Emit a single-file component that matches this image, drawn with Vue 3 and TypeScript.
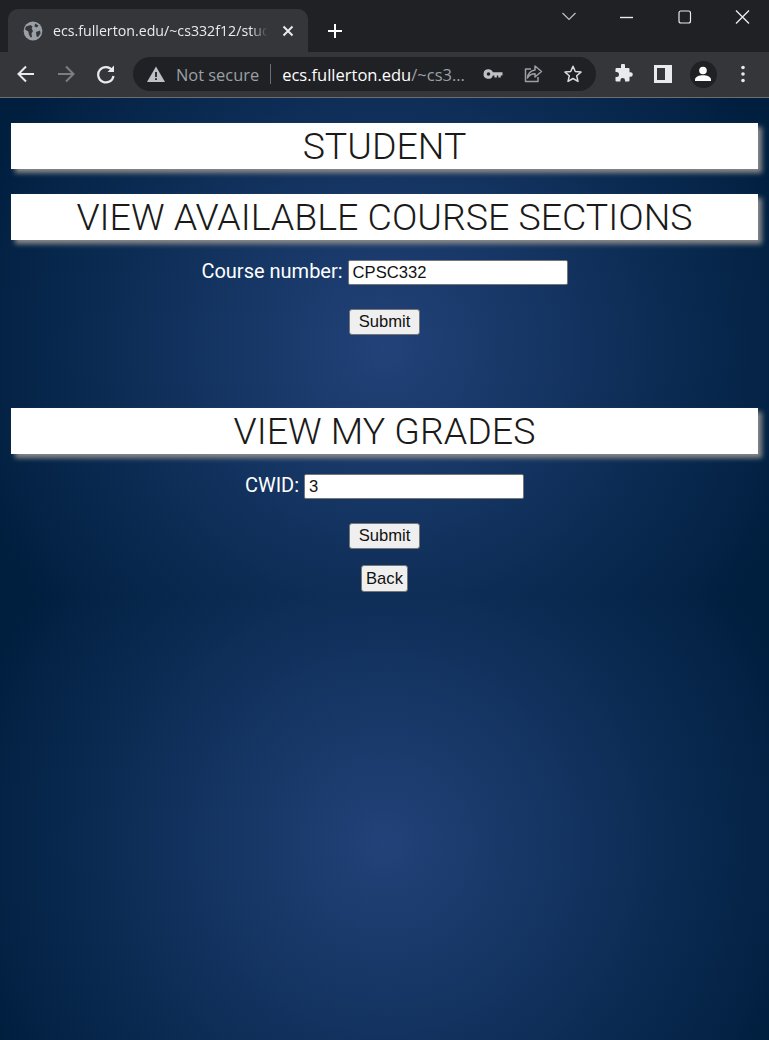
<script setup lang="ts">
const tabTitle: string = 'ecs.fullerton.edu/~cs332f12/student.php'
const courseNumber = 'CPSC332'
const cwid = '3'
</script>

<template>
  <div class="window">
    <header class="titlebar">
      <div class="tab">
        <svg class="favicon" viewBox="0 0 20 20" width="20" height="20">
          <circle cx="10" cy="10" r="9.400" fill="#9aa0a6" />
          <path d="M3 5.500 7.500 4l2 1.500-.8 2.200L10 10l-1.500 2.500L9 16l-1.500.5-1.700-3.300-.4-2.600L2 8.500zM12 2.500l3.500 2-1.500 2-2.500-1zM13 11l4-1.500.6 3-2.600 3.500-1.500-.5z" fill="#35363a" />
        </svg>
        <span class="tab-title">{{ tabTitle }}</span>
        <svg class="tab-close" viewBox="0 0 12 12" width="12" height="12">
          <path d="M1.500 1.500l9 9M10.500 1.500l-9 9" stroke="#e8eaed" stroke-width="2" fill="none" />
        </svg>
      </div>
      <svg class="new-tab" viewBox="0 0 16 16" width="16" height="16">
        <path d="M8 1v14M1 8h14" stroke="#fff" stroke-width="2" fill="none" />
      </svg>
      <div class="win-controls">
        <svg class="win-btn" viewBox="0 0 58 30" width="58" height="30"><path d="M22.500 13l6.500 6.500 6.500-6.500" stroke="#bdc1c6" stroke-width="1.200" fill="none" /></svg>
        <svg class="win-btn" viewBox="0 0 58 30" width="58" height="30"><path d="M22 17.500h13" stroke="#e8eaed" stroke-width="1.400" fill="none" /></svg>
        <svg class="win-btn" viewBox="0 0 58 30" width="58" height="30"><rect x="23" y="11" width="11.500" height="12" rx="2" stroke="#e8eaed" stroke-width="1.200" fill="none" /></svg>
        <svg class="win-btn" viewBox="0 0 58 30" width="58" height="30"><path d="M22 10.500l13 13M35 10.500l-13 13" stroke="#e8eaed" stroke-width="1.400" fill="none" /></svg>
      </div>
    </header>

    <nav class="toolbar">
      <div class="tool">
        <svg viewBox="0 0 20 20" width="20" height="20"><path d="M18 10H3M10 2.500 2.500 10l7.500 7.500" stroke="#e8eaed" stroke-width="2" fill="none" /></svg>
      </div>
      <div class="tool">
        <svg viewBox="0 0 20 20" width="20" height="20"><path d="M2 10h15M10 2.500l7.500 7.500-7.500 7.500" stroke="#7b7e82" stroke-width="2" fill="none" /></svg>
      </div>
      <div class="tool">
        <svg viewBox="0 0 20 20" width="20" height="20"><path d="M16.200 6.300A7.700 7.700 0 1 0 17.500 12" stroke="#e8eaed" stroke-width="2.200" fill="none" /><path d="M18 1.500V8h-6.500z" fill="#e8eaed" /></svg>
      </div>
      <div class="omnibox">
        <svg class="warn" viewBox="0 0 18 16" width="18" height="16">
          <path d="M9 0.500 18 16H0z" fill="#bdc1c6" />
          <path d="M8.100 6h1.800v5H8.100zM8.100 12.200h1.800V14H8.100z" fill="#202124" />
        </svg>
        <span class="not-secure">Not secure</span>
        <span class="divider"></span>
        <span class="url"><b>ecs.fullerton.edu</b><i>/~cs3...</i></span>
        <div class="omni-icons">
          <svg viewBox="0 0 20 20" width="20" height="20"><path fill-rule="evenodd" d="M5.500 5.200a4.800 4.800 0 0 1 4.400 3H19.500v3.300h-1.800v2h-2.400v-2H13.800v2h-2.400v-2H9.900a4.800 4.800 0 1 1-4.400-6.300zm0 3a1.800 1.800 0 1 0 0 3.600 1.800 1.800 0 0 0 0-3.600z" fill="#bdc1c6" /></svg>
          <svg viewBox="0 0 20 20" width="20" height="20"><path d="M8 5H2.500v12.500H15V13M12 2l6.500 5.500L12 13V9.800c-3.500 0-6 1.200-7.500 4.200 .5-4.500 3.200-7.400 7.500-8z" stroke="#9aa0a6" stroke-width="1.500" fill="none" stroke-linejoin="round" /></svg>
          <svg viewBox="0 0 20 20" width="20" height="20"><path d="M10 2.300l2.300 5.200 5.700.6-4.300 3.700 1.300 5.600L10 14.500l-5 2.900 1.300-5.600L2 8.100l5.700-.6z" stroke="#dadce0" stroke-width="1.500" fill="none" stroke-linejoin="round" /></svg>
        </div>
      </div>
      <div class="tool first-ext">
        <svg viewBox="0 0 20 20" width="20" height="20"><path d="M8 1.500a2 2 0 0 1 4 .2V4h3.500A1 1 0 0 1 16.500 5v3.200h1a2.300 2.300 0 0 1 0 4.600h-1v3.700a1 1 0 0 1-1 1H12v-1.200a2.300 2.300 0 0 0-4.600 0v1.200H3.500a1 1 0 0 1-1-1V13h1a2.500 2.500 0 0 0 0-5h-1V5a1 1 0 0 1 1-1H8z" fill="#e8eaed" /></svg>
      </div>
      <div class="tool">
        <svg viewBox="0 0 20 20" width="20" height="20"><path d="M1 1h18v18H1z" fill="#e8eaed" /><path d="M4 4h8v12H4z" fill="#35363a" /></svg>
      </div>
      <div class="tool">
        <span class="avatar">
          <svg viewBox="0 0 20 20" width="20" height="20"><circle cx="10" cy="6.500" r="3.800" fill="#fff" /><path d="M2 17v-1.500c0-2.800 4.400-4.300 8-4.300s8 1.500 8 4.300V17z" fill="#fff" /></svg>
        </span>
      </div>
      <div class="tool">
        <svg viewBox="0 0 20 20" width="20" height="20"><circle cx="10" cy="3.500" r="1.800" fill="#e8eaed" /><circle cx="10" cy="10" r="1.800" fill="#e8eaed" /><circle cx="10" cy="16.500" r="1.800" fill="#e8eaed" /></svg>
      </div>
    </nav>

    <main class="page">
      <h1 class="band student">STUDENT</h1>

      <h1 class="band">VIEW AVAILABLE COURSE SECTIONS</h1>
      <form class="form" @submit.prevent>
        <div class="field">
          <label for="course">Course number:</label>
          <input id="course" type="text" :value="courseNumber" />
        </div>
        <button class="btn" type="submit">Submit</button>
      </form>

      <h1 class="band grades">VIEW MY GRADES</h1>
      <form class="form" @submit.prevent>
        <div class="field">
          <label for="cwid">CWID:</label>
          <input id="cwid" type="text" :value="cwid" />
        </div>
        <button class="btn" type="submit">Submit</button>
      </form>
      <button class="btn back" type="button">Back</button>
    </main>
  </div>
</template>

<style scoped>
.window {
  display: flex;
  flex-direction: column;
  width: 769px;
  height: 1040px;
  overflow: hidden;
}

/* Browser chrome */
.titlebar {
  display: flex;
  align-items: flex-start;
  height: 52px;
  flex: none;
  background: #202124;
  padding-left: 8px;
  box-sizing: border-box;
}
.tab {
  display: flex;
  align-items: center;
  width: 300px;
  height: 43px;
  margin-top: 9px;
  background: #35363a;
  border-radius: 10px 10px 0 0;
  padding: 0 14px 0 15px;
  box-sizing: border-box;
}
.favicon {
  flex: none;
  margin-right: 10px;
}
.tab-title {
  flex: 1;
  min-width: 0;
  overflow: hidden;
  white-space: nowrap;
  font: 14.2px "Open Sans", sans-serif;
  color: #e8eaed;
  -webkit-mask-image: linear-gradient(to right, #000 90%, transparent 98%);
  mask-image: linear-gradient(to right, #000 90%, transparent 98%);
}
.tab-close {
  flex: none;
  margin-left: 10px;
}
.new-tab {
  margin: 23px 0 0 19px;
}
.win-controls {
  display: flex;
  margin-left: auto;
  margin-right: -3px;
}
.win-btn {
  display: block;
}
.toolbar {
  display: flex;
  align-items: center;
  flex: none;
  height: 46px;
  padding: 0 6px 1px 6px;
  box-sizing: border-box;
  background: #35363a;
  border-bottom: 1px solid #6b6d70;
}
.tool {
  flex: none;
  display: flex;
  align-items: center;
  justify-content: center;
  width: 40px;
  height: 34px;
}
.first-ext {
  margin-left: 7px;
}
.avatar {
  display: flex;
  align-items: center;
  justify-content: center;
  width: 27px;
  height: 27px;
  border-radius: 50%;
  background: #202124;
}
.avatar svg {
  width: 20px;
  height: 20px;
}
.omnibox {
  display: flex;
  align-items: center;
  width: 463px;
  height: 34px;
  margin-left: 7px;
  padding-left: 14px;
  box-sizing: border-box;
  border-radius: 17px;
  background: #202124;
}
.warn {
  flex: none;
}
.not-secure {
  margin-left: 11px;
  font: 16.4px "Open Sans", sans-serif;
  color: #9aa0a6;
  white-space: nowrap;
}
.divider {
  width: 1px;
  height: 20px;
  margin: 0 11px;
  background: #6b6d70;
  flex: none;
}
.url {
  font: 16.5px "Open Sans", sans-serif;
  white-space: nowrap;
}
.url b {
  font-weight: 400;
  color: #fff;
}
.url i {
  font-style: normal;
  color: #9aa0a6;
}
.omni-icons {
  display: flex;
  margin-left: auto;
  margin-right: 13px;
  gap: 20px;
}

/* Page */
.page {
  flex: 1;
  display: flex;
  flex-direction: column;
  align-items: center;
  padding: 25px 11px 0;
  box-sizing: border-box;
  background-color: #001f3f;
  background-image: radial-gradient(circle 430px at center, #224279 0%, #001f3f 100%);
  background-size: 100% 497px;
  background-repeat: repeat-y;
}
.band {
  align-self: stretch;
  height: 46px;
  margin: 0;
  background: #fff;
  box-shadow: 4px 4px 5px #8a8a8a;
  text-align: center;
  font: 300 37.5px/46px Roboto, sans-serif;
  color: #1a1a1a;
}
.student {
  margin-bottom: 25px;
}
.grades {
  margin-top: 73px;
}
.form {
  display: flex;
  flex-direction: column;
  align-items: center;
  margin-top: 20px;
}
.field {
  display: flex;
  align-items: center;
  gap: 5px;
  height: 25px;
}
.field label {
  font: 400 20px Roboto, sans-serif;
  color: #fff;
  margin-top: -4px;
}
.field input {
  width: 220px;
  height: 25px;
  box-sizing: border-box;
  margin: 0;
  padding: 1px 4px;
  background: #fff;
  border: 1px solid #767676;
  border-radius: 2px;
  font: 16.6px "Liberation Sans", Arial, sans-serif;
  color: #111;
}
.btn {
  box-sizing: border-box;
  width: 71px;
  height: 26px;
  margin: 24px 0 0;
  padding: 0;
  background: #efefef;
  border: 1px solid #767676;
  border-radius: 3px;
  font: 16.6px "Liberation Sans", Arial, sans-serif;
  color: #111;
}
.back {
  width: 47px;
  height: 27px;
  margin-top: 16px;
}
</style>

<style>
html,
body {
  margin: 0;
  background: #001f3f;
}
</style>
